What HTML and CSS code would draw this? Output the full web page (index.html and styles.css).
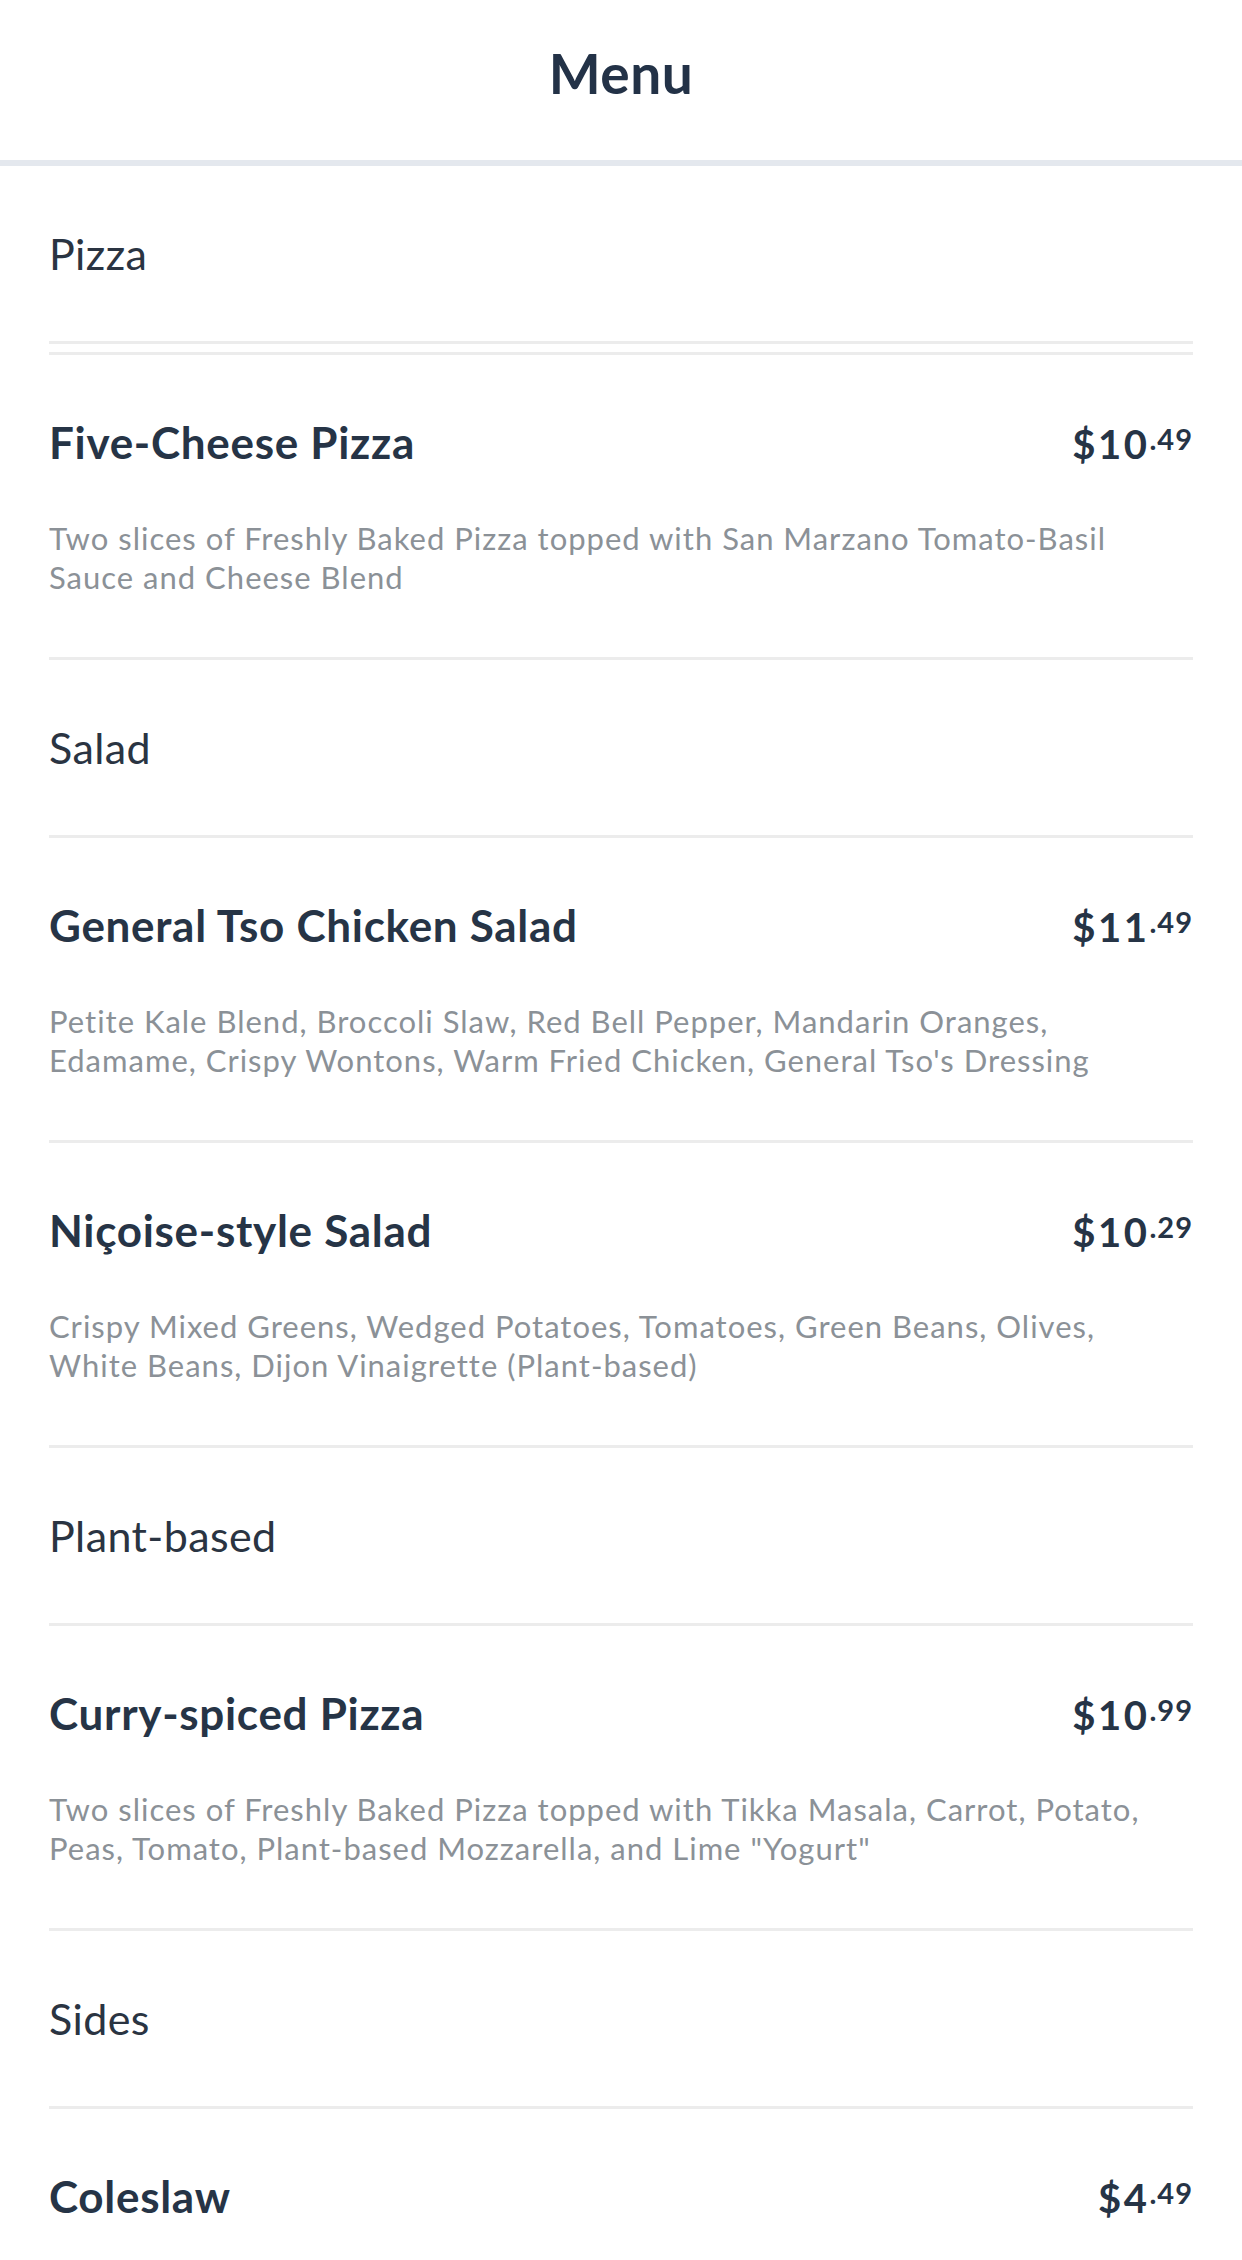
FILE: index.html
```html
<!DOCTYPE html>
<html lang="en">

<head>
    <title>Menu</title>
    <link rel="stylesheet" href="styles.css">
</head>

<body>
    <header class="topbar">
        <h1>Menu</h1>
    </header>

    <main class="menu">
        <section class="section">
            <div class="category">Pizza</div>
            <div class="items first">
                <div class="item">
                    <div class="item-head">
                        <span class="item-name">Five-Cheese Pizza</span>
                        <span class="price">$10<span class="cents">.49</span></span>
                    </div>
                    <p class="desc">Two slices of Freshly Baked Pizza topped with San Marzano Tomato-Basil Sauce and Cheese Blend</p>
                </div>
            </div>
        </section>

        <section class="section">
            <div class="category">Salad</div>
            <div class="items">
                <div class="item">
                    <div class="item-head">
                        <span class="item-name">General Tso Chicken Salad</span>
                        <span class="price">$11<span class="cents">.49</span></span>
                    </div>
                    <p class="desc">Petite Kale Blend, Broccoli Slaw, Red Bell Pepper, Mandarin Oranges, Edamame, Crispy Wontons, Warm Fried Chicken, General Tso's Dressing</p>
                </div>
                <div class="item">
                    <div class="item-head">
                        <span class="item-name">Niçoise-style Salad</span>
                        <span class="price">$10<span class="cents">.29</span></span>
                    </div>
                    <p class="desc">Crispy Mixed Greens, Wedged Potatoes, Tomatoes, Green Beans, Olives, White Beans, Dijon Vinaigrette (Plant-based)</p>
                </div>
            </div>
        </section>

        <section class="section">
            <div class="category">Plant-based</div>
            <div class="items">
                <div class="item">
                    <div class="item-head">
                        <span class="item-name">Curry-spiced Pizza</span>
                        <span class="price">$10<span class="cents">.99</span></span>
                    </div>
                    <p class="desc">Two slices of Freshly Baked Pizza topped with Tikka Masala, Carrot, Potato, Peas, Tomato, Plant-based Mozzarella, and Lime "Yogurt"</p>
                </div>
            </div>
        </section>

        <section class="section">
            <div class="category">Sides</div>
            <div class="items">
                <div class="item">
                    <div class="item-head">
                        <span class="item-name">Coleslaw</span>
                        <span class="price">$4<span class="cents">.49</span></span>
                    </div>
                </div>
            </div>
        </section>
    </main>
</body>

</html>
```

FILE: styles.css
```css
body { margin: 0; background: #fff; font-family: Lato, "Open Sans", sans-serif; color: #263446; }
.topbar { height: 146px; padding-bottom: 14px; display: flex; align-items: center; justify-content: center; border-bottom: 6px solid #e4e8ee; }
.topbar h1 { margin: 0; font-size: 55px; font-weight: 700; letter-spacing: 0.5px; color: #233247; }
.menu { padding: 0 49px 0 49px; }
.category { height: 175px; display: flex; align-items: center; font-size: 43px; font-weight: 400; letter-spacing: 0.4px; color: #2a3442; border-bottom: 3px solid #ececec; }
.items.first { margin-top: 8px; border-top: 3px solid #ececec; }
.item { padding: 58px 0 60px; border-bottom: 3px solid #ececec; }
.item-head { display: flex; justify-content: space-between; align-items: baseline; height: 52px; line-height: 52px; }
.item-name { font-size: 44px; font-weight: 700; letter-spacing: 0.7px; color: #263446; }
.price { font-size: 40px; font-weight: 700; letter-spacing: 2.5px; color: #263446; }
.cents { font-size: 29px; letter-spacing: 1px; vertical-align: 9px; }
.desc { margin: 54px 0 0; max-width: 1110px; font-size: 31px; line-height: 39px; letter-spacing: 1px; color: #8b9197; }
```
